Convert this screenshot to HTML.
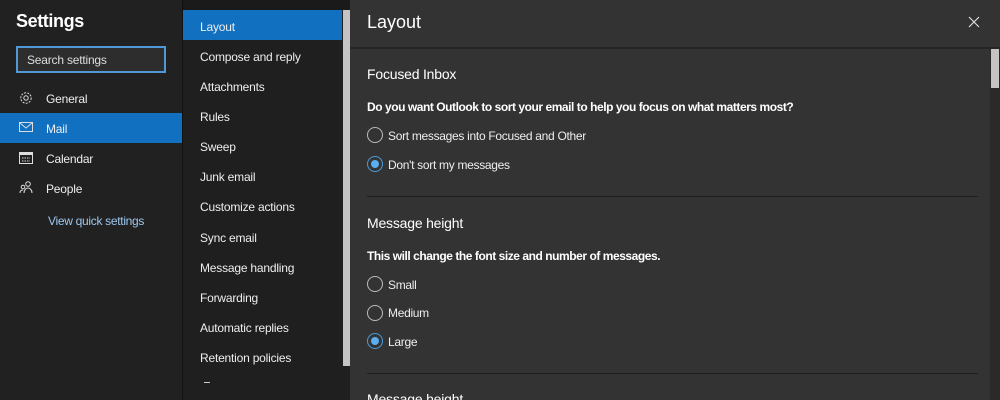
<!DOCTYPE html>
<html><head><style>
*{margin:0;padding:0;box-sizing:border-box}
html,body{width:1000px;height:400px;overflow:hidden}
body{background:#202020;font-family:"Liberation Sans",sans-serif;color:#fff;position:relative;font-size:12px}
.a{position:absolute}
.nav{left:0;top:0;width:182px;height:400px;background:#212121}
.mid{left:182px;top:0;width:168px;height:400px;background:#1f1f1f;border-left:1px solid #111}
.right{left:350px;top:0;width:650px;height:400px;background:#333;overflow:hidden}
.mi{position:absolute;left:17px;font-size:12px;color:#eee;letter-spacing:-0.2px}
.ni{position:absolute;left:46px;font-size:12px;color:#eee;letter-spacing:-0.2px}
.r{position:absolute;left:17px;width:16px;height:16px;border:1px solid #bbb;border-radius:50%}
.r.on{border-color:#4a9ad8}
.r.on::after{content:"";position:absolute;left:3px;top:3px;width:8px;height:8px;border-radius:50%;background:#5aaeef}
.rl{position:absolute;left:38px;font-size:12px;color:#eee;letter-spacing:-0.3px}
</style></head><body>
<div class="a nav">
 <div class="a" style="left:16px;top:11px;font-size:18px;font-weight:bold;letter-spacing:-0.4px">Settings</div>
 <div class="a" style="left:16px;top:46px;width:150px;height:27px;border:2px solid #4f9ad6;background:#2d2d2d"></div>
 <div class="a" style="left:27px;top:53px;font-size:12px;color:#ddd;letter-spacing:-0.2px">Search settings</div>
 <svg class="a" style="left:19px;top:91px" width="14" height="14" viewBox="0 0 14 14"><circle cx="7" cy="7" r="2.2" fill="none" stroke="#ddd"/><circle cx="7" cy="7" r="5.2" fill="none" stroke="#ddd" stroke-dasharray="2 1.2"/></svg>
 <div class="ni" style="top:92px">General</div>
 <div class="a" style="left:0;top:113px;width:182px;height:30px;background:#1270c1"></div>
 <svg class="a" style="left:19px;top:122px" width="14" height="11" viewBox="0 0 14 11"><rect x=".5" y=".5" width="13" height="9" fill="none" stroke="#ddd"/><path d="M1 1l6 5 6-5" fill="none" stroke="#ddd"/></svg>
 <div class="ni" style="top:122px">Mail</div>
 <svg class="a" style="left:19px;top:151px" width="14" height="13" viewBox="0 0 14 13"><rect x=".5" y="1.5" width="13" height="11" fill="none" stroke="#ddd"/><rect x="1" y="2" width="12" height="2" fill="#ddd"/><path d="M3 7h8M3 10h8" stroke="#ddd" stroke-dasharray="1.5 1"/></svg>
 <div class="ni" style="top:152px">Calendar</div>
 <svg class="a" style="left:19px;top:180px" width="14" height="14" viewBox="0 0 14 14"><circle cx="9" cy="4" r="2.3" fill="none" stroke="#ddd"/><circle cx="4" cy="7" r="1.8" fill="none" stroke="#ddd"/><path d="M5 13c0-3 2-5 4-5s4 2 4 5M1 13c0-2 1-3 3-3" fill="none" stroke="#ddd"/></svg>
 <div class="ni" style="top:182px">People</div>
 <div class="a" style="left:48px;top:214px;color:#9cc8ee;font-size:12px;letter-spacing:-0.3px">View quick settings</div>
</div>
<div class="a mid">
 <div class="a" style="left:0;top:0;width:168px;height:10px;background:#1a1a1a"></div>
 <div class="a" style="left:0;top:10px;width:159px;height:30px;background:#1270c1"></div>
 <div class="a" style="left:160px;top:10px;width:7px;height:356px;background:#c4c4c4"></div>
 <div class="mi" style="top:20px">Layout</div>
 <div class="mi" style="top:50px">Compose and reply</div>
 <div class="mi" style="top:80px">Attachments</div>
 <div class="mi" style="top:110px">Rules</div>
 <div class="mi" style="top:140px">Sweep</div>
 <div class="mi" style="top:170px">Junk email</div>
 <div class="mi" style="top:200px">Customize actions</div>
 <div class="mi" style="top:231px">Sync email</div>
 <div class="mi" style="top:261px">Message handling</div>
 <div class="mi" style="top:291px">Forwarding</div>
 <div class="mi" style="top:321px">Automatic replies</div>
 <div class="mi" style="top:351px">Retention policies</div>
 <div class="a" style="left:21px;top:382px;width:6px;height:1px;background:#ccc"></div>
</div>
<div class="a right">
 <div class="a" style="left:17px;top:12px;font-size:18px">Layout</div>
 <svg class="a" style="left:618px;top:16px" width="12" height="12" viewBox="0 0 12 12"><path d="M1 1l10 10M11 1L1 11" stroke="#ddd" stroke-width="1.2"/></svg>
 <div class="a" style="left:0;top:47px;width:650px;height:2px;background:#262626"></div>
 <div class="a" style="left:640px;top:49px;width:10px;height:351px;background:#2a2a2a"></div>
 <div class="a" style="left:641px;top:49px;width:8px;height:39px;background:#c4c4c4"></div>
 <div class="a" style="left:17px;top:66px;font-size:14px;letter-spacing:-0.2px">Focused Inbox</div>
 <div class="a" style="left:17px;top:100px;font-size:12px;font-weight:bold;letter-spacing:-0.45px">Do you want Outlook to sort your email to help you focus on what matters most?</div>
 <div class="r" style="top:127px"></div><div class="rl" style="top:129px">Sort messages into Focused and Other</div>
 <div class="r on" style="top:156px"></div><div class="rl" style="top:158px">Don't sort my messages</div>
 <div class="a" style="left:17px;top:196px;width:611px;height:1px;background:#1e1e1e"></div>
 <div class="a" style="left:17px;top:215px;font-size:14px;letter-spacing:-0.2px">Message height</div>
 <div class="a" style="left:17px;top:249px;font-size:12px;font-weight:bold;letter-spacing:-0.45px">This will change the font size and number of messages.</div>
 <div class="r" style="top:276px"></div><div class="rl" style="top:278px">Small</div>
 <div class="r" style="top:305px"></div><div class="rl" style="top:306px">Medium</div>
 <div class="r on" style="top:333px"></div><div class="rl" style="top:335px">Large</div>
 <div class="a" style="left:17px;top:373px;width:611px;height:1px;background:#1e1e1e"></div>
 <div class="a" style="left:17px;top:391px;font-size:14px;letter-spacing:-0.2px">Message height</div>
</div>
</body></html>
